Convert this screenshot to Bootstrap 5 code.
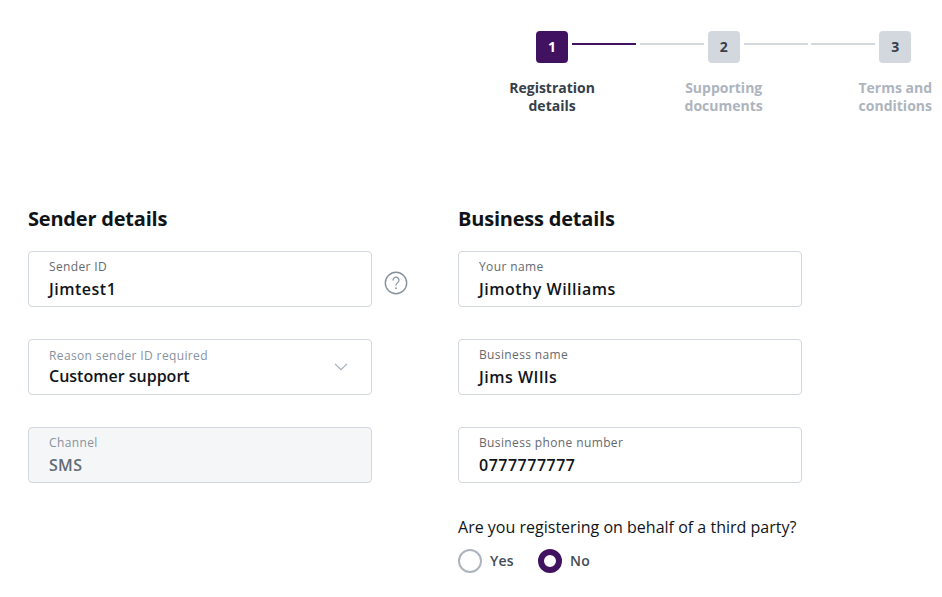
<!DOCTYPE html>
<html lang="en">
<head>
<meta charset="utf-8">
<meta name="viewport" content="width=device-width, initial-scale=1">
<title>Sender registration</title>
<link href="https://cdn.jsdelivr.net/npm/bootstrap@5.3.0/dist/css/bootstrap.min.css" rel="stylesheet">
<style>
  body { font-family: "Open Sans", "Noto Sans", sans-serif; color: #0f1419; background: #fff; }
  .stepper { padding: 31px 0 0 466.3px; height: 207px; }
  .step { flex: 0 0 171.6px; font-size: 14px; line-height: 18px; font-weight: 700; color: #adb4be; }
  .step-track { gap: 4px; margin-bottom: 16px; }
  .step-line { width: 64px; height: 2px; margin-top: 12px; background: #d3d8df; }
  .step-line.blank { background: transparent; }
  .step-line.done, .step.current .step-num { background: #41125f; }
  .step-num { width: 32px; height: 32px; border-radius: 4px; background: #d3d8df; color: #36404a; }
  .step.current { color: #36404a; }
  .step.current .step-num { color: #fff; }
  .step-label { width: 100px; }
  .form-area { padding-left: 28px; }
  .form-col { width: 430px; }
  .section-title { font-size: 20px; line-height: 24px; font-weight: 700; letter-spacing: -.21px; margin: 0 0 20px; }
  .field { width: 344px; height: 56px; border: 1px solid #d3d8df; border-radius: 4px; padding: 7px 20px 0; background: #fff; }
  .field-label { font-size: 12px; line-height: 16px; letter-spacing: .37px; color: #66696d; }
  .field-value { font-size: 16px; line-height: 24px; font-weight: 600; letter-spacing: .5px; padding-top: 2px; }
  .field.select { padding-top: 8px; }
  .field.select .field-label, .field.locked .field-label { color: #88929e; }
  .field.select .field-value { padding-top: 0; letter-spacing: 0; }
  .field.locked { background: #f4f6f8; }
  .field.locked .field-value { color: #656b73; letter-spacing: .3px; }
  .fields { gap: 32px; }
  .chevron { margin: 15px 3px 0 0; }
  .help { margin-left: 12px; margin-top: 8px; }
  .question { font-size: 16px; line-height: 24px; letter-spacing: .01px; margin: 32px 0 10px; }
  .choice { gap: 8px; margin-right: 24px; font-size: 14px; line-height: 24px; font-weight: 600; letter-spacing: .25px; color: #434c56; cursor: pointer; }
  .choice .form-check-input { width: 24px; height: 24px; border: 2px solid #adb4be; }
  .choice .form-check-input:checked { border: 6px solid #41125f; background: #fff; }
</style>
<script src="https://cdn.jsdelivr.net/npm/bootstrap@5.3.0/dist/js/bootstrap.bundle.min.js"></script>
</head>
<body class="overflow-hidden">
<header class="stepper d-flex overflow-hidden">
  <div class="step current text-center">
    <div class="step-track d-flex justify-content-center">
      <span class="step-line blank"></span><span class="step-num d-flex align-items-center justify-content-center">1</span><span class="step-line done"></span>
    </div>
    <div class="step-label mx-auto">Registration details</div>
  </div>
  <div class="step text-center">
    <div class="step-track d-flex justify-content-center">
      <span class="step-line"></span><span class="step-num d-flex align-items-center justify-content-center">2</span><span class="step-line"></span>
    </div>
    <div class="step-label mx-auto">Supporting documents</div>
  </div>
  <div class="step text-center">
    <div class="step-track d-flex justify-content-center">
      <span class="step-line"></span><span class="step-num d-flex align-items-center justify-content-center">3</span><span class="step-line blank"></span>
    </div>
    <div class="step-label mx-auto">Terms and conditions</div>
  </div>
</header>
<main class="form-area d-flex">
  <section class="form-col">
    <h2 class="section-title">Sender details</h2>
    <div class="fields d-flex flex-column">
      <div class="d-flex">
        <div class="field"><div class="field-label">Sender ID</div><div class="field-value">Jimtest1</div></div>
        <svg class="help" width="24" height="48" viewBox="0 0 24 48" fill="none" stroke="#87929d" stroke-width="1.4" stroke-linecap="round"><circle cx="12" cy="24" r="10.7"/><path stroke-width="1.2" d="M9 21.100a3 2.900 0 1 1 5.200 2c-.9 1-2.200 1.500-2.200 3.100"/><circle cx="12" cy="29.200" r=".9" fill="#87929d" stroke="none"/></svg>
      </div>
      <div class="field select d-flex justify-content-between">
        <div><div class="field-label">Reason sender ID required</div><div class="field-value">Customer support</div></div>
        <svg class="chevron" width="14" height="8" viewBox="0 0 14 8" fill="none" stroke="#a5adb7" stroke-width="1.1"><path d="M1 .8l6 5.900 6-5.900"/></svg>
      </div>
      <div class="field locked"><div class="field-label">Channel</div><div class="field-value">SMS</div></div>
    </div>
  </section>
  <section class="form-col">
    <h2 class="section-title">Business details</h2>
    <div class="fields d-flex flex-column">
      <div class="field"><div class="field-label">Your name</div><div class="field-value">Jimothy Williams</div></div>
      <div class="field"><div class="field-label">Business name</div><div class="field-value">Jims WIlls</div></div>
      <div class="field"><div class="field-label">Business phone number</div><div class="field-value">0777777777</div></div>
    </div>
    <p class="question">Are you registering on behalf of a third party?</p>
    <div class="d-flex">
      <label class="choice d-flex align-items-center"><input class="form-check-input m-0" type="radio" name="third">Yes</label>
      <label class="choice d-flex align-items-center"><input class="form-check-input m-0" type="radio" name="third" checked>No</label>
    </div>
  </section>
</main>
</body>
</html>
